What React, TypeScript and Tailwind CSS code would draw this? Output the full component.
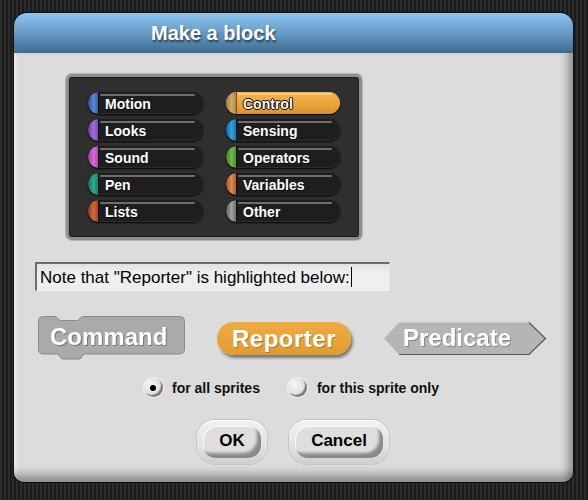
import React from "react";

type Cat = { label: string; cap: string; sel?: boolean };

const left: Cat[] = [
  { label: "Motion", cap: "bg-[linear-gradient(90deg,#2d4d96,#5f86d2_55%,#3b5ea9)]" },
  { label: "Looks", cap: "bg-[linear-gradient(90deg,#6a3fa8,#9a6fd8_55%,#7a4cbb)]" },
  { label: "Sound", cap: "bg-[linear-gradient(90deg,#9a3aa0,#cf6fd6_55%,#a94cb2)]" },
  { label: "Pen", cap: "bg-[linear-gradient(90deg,#0f6f5c,#2eab92_55%,#14806a)]" },
  { label: "Lists", cap: "bg-[linear-gradient(90deg,#983a18,#d0673a_55%,#a8461f)]" },
];
const right: Cat[] = [
  { label: "Control", cap: "bg-[linear-gradient(90deg,#a47c3c,#d2aa66_55%,#b08748)]", sel: true },
  { label: "Sensing", cap: "bg-[linear-gradient(90deg,#0c6ca0,#2ea0dc_55%,#127ab4)]" },
  { label: "Operators", cap: "bg-[linear-gradient(90deg,#3f7f1c,#74b847_55%,#4c8f26)]" },
  { label: "Variables", cap: "bg-[linear-gradient(90deg,#a5501f,#de8a4e_55%,#b45d28)]" },
  { label: "Other", cap: "bg-[linear-gradient(90deg,#5e5e5e,#a0a0a0_55%,#6e6e6e)]" },
];

const font = { fontFamily: '"Liberation Sans", Arial, Helvetica, sans-serif' };

function CatButton({ c, w }: { c: Cat; w: string }) {
  return (
    <div
      className={
        c.sel
          ? `relative flex h-[22px] ${w} items-center overflow-hidden rounded-full bg-[linear-gradient(180deg,#f3b650,#e9a336_60%,#d8922a)] shadow-[0_1px_1px_rgba(0,0,0,0.9)]`
          : `relative flex h-[22px] ${w} items-center overflow-hidden rounded-full bg-[#1e1e1e] shadow-[0_1px_2px_rgba(0,0,0,0.9),inset_0_-1px_1px_rgba(255,255,255,0.08)]`
      }
    >
      <div className={`h-full w-[10px] shrink-0 rounded-l-full ${c.cap}`} />
      <div className="h-full w-[1px] shrink-0 bg-[rgba(0,0,0,0.5)]" />
      {c.sel ? (
        <div className="absolute left-[12px] right-[8px] top-[1px] h-[2px] rounded bg-[#f7cd80]" />
      ) : (
        <div className="absolute left-[12px] right-[8px] top-[2px] h-[2px] rounded bg-[#6e6e6e]" />
      )}
      <span
        className={
          c.sel
            ? "ml-[6px] mt-[1px] text-[14px] font-bold leading-none text-white [text-shadow:-1px_0_#000,1px_0_#000,0_-1px_#000,0_1px_#000]"
            : "ml-[6px] mt-[2px] text-[14px] font-bold leading-none text-white [text-shadow:1px_1px_0_rgba(0,0,0,0.6)]"
        }
        style={font}
      >
        {c.label}
      </span>
    </div>
  );
}

function Radio({ on }: { on?: boolean }) {
  return (
    <div className="flex h-[19px] w-[19px] items-center justify-center rounded-full bg-[radial-gradient(circle_at_35%_35%,#f4f4f4,#dcdcdc_70%)] shadow-[inset_-2px_-2px_1px_rgba(0,0,0,0.45),0_0_0_1px_rgba(255,255,255,0.7)]">
      {on ? <div className="ml-[-2px] h-[6px] w-[6px] rounded-full bg-black" /> : null}
    </div>
  );
}

function PushButton({ label, w }: { label: string; w: string }) {
  return (
    <div
      className={`flex h-[44px] ${w} items-center justify-center rounded-[18px] bg-[linear-gradient(180deg,#f2f2f2,#e2e2e2_60%,#cfcfcf)] p-[6px] shadow-[0_0_0_1px_#c4c4c4,inset_0_1px_0_#ffffff]`}
    >
      <div className="flex h-full w-full items-center justify-center rounded-[13px] bg-[#dedede] shadow-[inset_-5px_-6px_3px_-1px_rgba(0,0,0,0.38),inset_1px_1px_1px_rgba(255,255,255,0.9)]">
        <span className="mb-[3px] text-[17px] font-bold leading-none text-black" style={font}>
          {label}
        </span>
      </div>
    </div>
  );
}

export default function App() {
  return (
    <div className="h-[500px] w-[588px] overflow-hidden bg-[repeating-linear-gradient(90deg,#2c2c2c_0px,#2c2c2c_2px,#1c1c1c_2px,#1c1c1c_4px)] pl-[14px] pt-[13px]" style={font}>
      <div className="flex h-[469px] w-[559px] flex-col overflow-hidden rounded-b-[10px] rounded-t-[13px] shadow-[0_0_0_1px_rgba(0,0,0,0.6)]">
        {/* title bar */}
        <div className="flex h-[40px] shrink-0 items-center bg-[linear-gradient(180deg,#8ec6f1,#6a9fcb_45%,#3e6b90)] pl-[137px]">
          <span className="text-[20px] font-bold leading-none text-white [text-shadow:1px_2px_2px_rgba(0,0,0,0.55)]" style={font}>
            Make a block
          </span>
        </div>
        {/* body */}
        <div className="flex flex-1 flex-col bg-[#dcdcdc] shadow-[inset_-10px_0_8px_-5px_rgba(0,0,0,0.35),inset_0_-16px_8px_-8px_rgba(0,0,0,0.32),inset_4px_0_4px_-2px_rgba(255,255,255,0.6)]">
          {/* palette */}
          <div className="ml-[52px] mt-[21px] h-[166px] w-[296px] rounded-[6px] border-[3px] border-[#8e8e8e] bg-[#2f2f2f] pl-[19px] pt-[15px] shadow-[inset_0_0_0_1px_#1c1c1c,0_0_0_1px_#b5b5b5]">
            <div className="flex gap-[23px]">
              <div className="flex flex-col gap-[5px]">
                {left.map((c) => (
                  <CatButton key={c.label} c={c} w="w-[115px]" />
                ))}
              </div>
              <div className="flex flex-col gap-[5px]">
                {right.map((c) => (
                  <CatButton key={c.label} c={c} w="w-[114px]" />
                ))}
              </div>
            </div>
          </div>

          {/* input */}
          <div className="ml-[21px] mt-[22px] flex h-[29px] w-[355px] items-center border-b border-l-2 border-r border-t-2 border-b-[#f0f0f0] border-l-[#6c6c6c] border-r-[#e6e6e6] border-t-[#6c6c6c] bg-[linear-gradient(180deg,#e2e2e2,#f0f0f0_40%,#ededed)] pl-[3px]">
            <span className="text-[17px] leading-none text-black" style={font}>
              Note that "Reporter" is highlighted below:
            </span>
            <div className="ml-[1px] h-[20px] w-[1px] bg-black" />
          </div>

          {/* block types */}
          <div className="mt-[25px] flex h-[43px] items-start">
            <svg className="ml-[24px]" width="148" height="44" viewBox="0 0 148 44">
              <path
                d="M0.5,5.5 Q0.5,0.5 5.5,0.5 L18,0.5 L22,4.5 L40,4.5 L44,0.5 L141.5,0.5 Q146.5,0.5 146.5,5.5 L146.5,33 Q146.5,38 141.5,38 L46,38 L42,43 L24,43 L20,38 L5.5,38 Q0.5,38 0.5,33 Z"
                fill="#aaaaaa"
                stroke="#8a8a8a"
                strokeWidth="1"
              />
              <text
                x="12"
                y="29"
                fill="#ffffff"
                fontSize="24"
                fontWeight="700"
                style={{ ...font, filter: "drop-shadow(1px 1px 0 rgba(0,0,0,0.3))" }}
              >
                Command
              </text>
            </svg>
            <div className="ml-[31px] mt-[6px] flex h-[33px] w-[134px] items-center justify-center rounded-full bg-[linear-gradient(180deg,#eeab40,#e8a238_60%,#df9a30)] shadow-[2px_3px_3px_rgba(0,0,0,0.45)]">
              <span className="text-[24px] font-bold leading-none tracking-[0.5px] text-white [text-shadow:1px_1px_0_rgba(0,0,0,0.25)]" style={font}>
                Reporter
              </span>
            </div>
            <svg className="ml-[32px] mt-[6px]" width="164" height="34" viewBox="0 0 164 34">
              <path d="M1,16.5 L16,0.5 L146,0.5 L162.5,16.5 L146,32.5 L16,32.5 Z" fill="#b5b5b5" />
              <path d="M146,0.5 L162.5,16.5 L146,32.5 L16,32.5" fill="none" stroke="#555555" strokeWidth="1.2" />
              <text
                x="20"
                y="24"
                fill="#ffffff"
                fontSize="24"
                fontWeight="700"
                style={{ ...font, filter: "drop-shadow(1px 1px 0 rgba(0,0,0,0.25))" }}
              >
                Predicate
              </text>
            </svg>
          </div>

          {/* radios */}
          <div className="ml-[130px] mt-[19px] flex h-[19px] items-center">
            <Radio on />
            <span className="ml-[9px] text-[14px] font-bold leading-none text-[#111]" style={font}>
              for all sprites
            </span>
            <div className="ml-[28px]">
              <Radio />
            </div>
            <span className="ml-[10px] text-[14px] font-bold leading-none text-[#111]" style={font}>
              for this sprite only
            </span>
          </div>

          {/* buttons */}
          <div className="ml-[183px] mt-[23px] flex gap-[22px]">
            <PushButton label="OK" w="w-[70px]" />
            <PushButton label="Cancel" w="w-[100px]" />
          </div>
        </div>
      </div>
    </div>
  );
}
